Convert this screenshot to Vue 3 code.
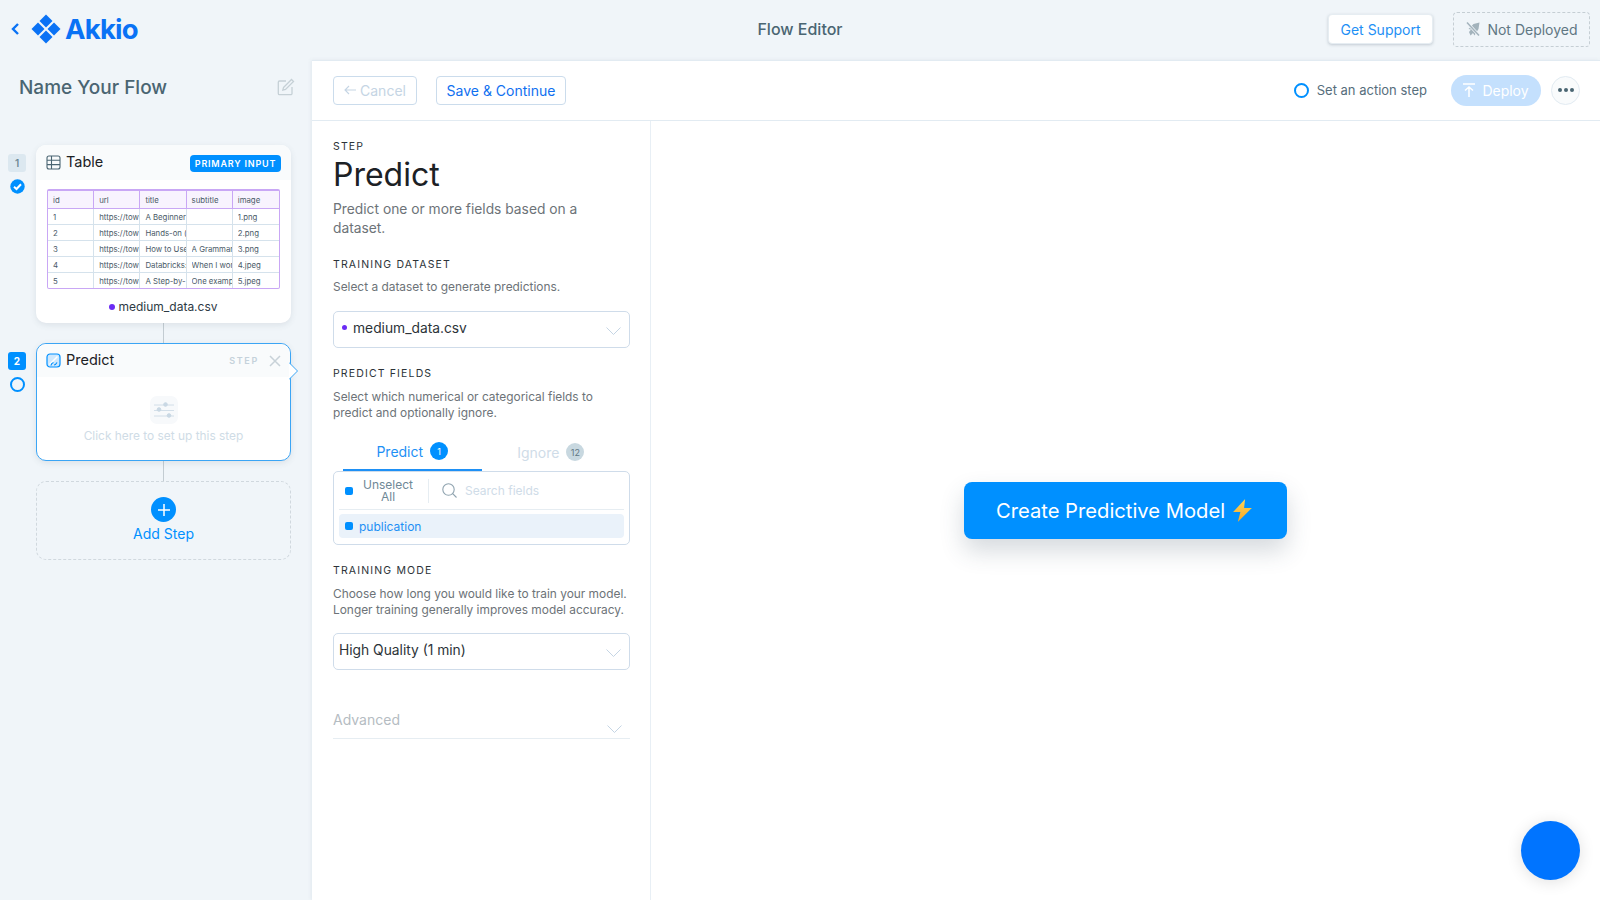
<template>
  <div class="page">
    <header class="topbar">
      <div class="brand">
        <svg class="back" width="10" height="14" viewBox="0 0 10 14"><path d="M8 2 3 7l5 5" fill="none" stroke="#0a72f5" stroke-width="2.4"/></svg>
        <svg class="logo" width="30" height="30" viewBox="0 0 30 30" fill="#0a72f5">
          <path d="M15 0.5 21.5 7 15 13.5 8.5 7z" />
          <path d="M7 8.5 13.5 15 7 21.5 0.5 15z" />
          <path d="M23 8.5 29.5 15 23 21.5 16.5 15z" />
          <path d="M15 16.5 21.5 23 15 29.5 8.5 23z" />
        </svg>
        <span class="brand-name">Akkio</span>
      </div>
      <div class="page-title">Flow Editor</div>
      <div class="top-actions">
        <button class="support" type="button">Get Support</button>
        <div class="not-deployed">
          <svg width="16" height="16" viewBox="0 0 16 16" fill="#a3b3bc">
            <path d="M14.500 1.500 8.500 3 3.500 8l2.500.5L4 11l1.500 3.500L8 12l1.500 2.500L13.500 8z" />
            <path d="M2 1.500 14 14.500" stroke="#f0f5f9" stroke-width="3" />
            <path d="M2 1.500 14 14.500" stroke="#a3b3bc" stroke-width="1.500" />
          </svg>
          Not Deployed
        </div>
      </div>
    </header>

    <div class="body">
      <aside class="sidebar">
        <div class="flow-name">
          <span>Name Your Flow</span>
          <svg width="18" height="18" viewBox="0 0 18 18" fill="none" stroke="#c5d0d6" stroke-width="1.3">
            <path d="M9 3H2.5A1.2 1.2 0 0 0 1.3 4.2v11.3a1.2 1.2 0 0 0 1.2 1.2h11.3a1.2 1.2 0 0 0 1.2-1.2V9" />
            <path d="M6.5 9.5 14.5 1.5l2 2-8 8-2.700.7z" />
          </svg>
        </div>

        <div class="steps">
          <div class="step-row">
            <div class="marker">
              <span class="num">1</span>
              <svg width="15" height="15" viewBox="0 0 15 15"><circle cx="7.500" cy="7.500" r="7.200" fill="#0090ff"/><path d="M4 7.800 6.500 10 11 5.300" fill="none" stroke="#fff" stroke-width="2"/></svg>
            </div>
            <div class="card">
              <div class="card-head">
                <svg width="15" height="15" viewBox="0 0 15 15" fill="none" stroke="#4a6572" stroke-width="1.100"><rect x="1" y="1" width="13" height="13" rx="2"/><path d="M1 5.300h13M1 9.600h13M5.500 1v13"/></svg>
                <span class="card-title">Table</span>
                <span class="primary-tag">PRIMARY INPUT</span>
              </div>
              <div class="preview">
                <table class="mini-table">
                  <thead>
                    <tr><th v-for="c in columns" :key="c">{{ c }}</th></tr>
                  </thead>
                  <tbody>
                    <tr v-for="row in rows" :key="row[0]">
                      <td v-for="(cell, i) in row" :key="i"><div class="cell">{{ cell }}</div></td>
                    </tr>
                  </tbody>
                </table>
                <div class="file-name"><i class="dot"></i>medium_data.csv</div>
              </div>
            </div>
          </div>

          <div class="line"></div>

          <div class="step-row">
            <div class="marker">
              <span class="num active">2</span>
              <span class="ring"></span>
            </div>
            <div class="card selected">
              <div class="card-head short">
                <svg width="15" height="15" viewBox="0 0 15 15" fill="#cfe8fd" stroke="#0090ff" stroke-width="1.200"><rect x="1" y="1" width="13" height="13" rx="3"/><path d="M3.500 11.500 11.500 3.500" stroke="#fff" stroke-width="1.500"/><path d="M5 12.500c0-2 1-2.500 2.500-3M8 12c1 0 2-.8 3-2.500" fill="none"/></svg>
                <span class="card-title">Predict</span>
                <span class="step-tag">STEP</span>
                <svg class="close" width="12" height="12" viewBox="0 0 12 12"><path d="M1 1l10 10M11 1 1 11" stroke="#c8d2d8" stroke-width="1.500"/></svg>
              </div>
              <div class="setup">
                <div class="setup-icon">
                  <svg width="20" height="16" viewBox="0 0 20 16" fill="#c9d8e4" stroke="#c9d8e4">
                    <path d="M0 3h20M0 8.500h20M0 14h20" stroke-width="0.800"/>
                    <circle cx="11.500" cy="2.500" r="1.800"/><circle cx="5" cy="7.500" r="1.800"/><circle cx="15" cy="13.500" r="1.800"/>
                  </svg>
                </div>
                <span>Click here to set up this step</span>
              </div>
              <svg class="pointer" width="10" height="20" viewBox="0 0 10 20"><path d="M0 1.500 8.500 10 0 18.500" fill="#fff" stroke="#3ba5f5" stroke-width="1"/></svg>
            </div>
          </div>

          <div class="line short-line"></div>

          <div class="step-row">
            <div class="marker"></div>
            <div class="add-step">
              <span class="plus">
                <svg width="14" height="14" viewBox="0 0 14 14"><path d="M7 1v12M1 7h12" stroke="#fff" stroke-width="1.500"/></svg>
              </span>
              <span>Add Step</span>
            </div>
          </div>
        </div>
      </aside>

      <main class="main">
        <div class="toolbar">
          <button class="tool-btn cancel" type="button">
            <svg width="12" height="10" viewBox="0 0 12 10"><path d="M5 1 1 5l4 4M1 5h11" fill="none" stroke="#c5d5e4" stroke-width="1.100"/></svg>
            Cancel
          </button>
          <button class="tool-btn save" type="button">Save &amp; Continue</button>
          <div class="spacer"></div>
          <span class="ring"></span>
          <span class="action-text">Set an action step</span>
          <button class="deploy" type="button">
            <svg width="12" height="14" viewBox="0 0 12 14" fill="none" stroke="#fff" stroke-width="1.500"><path d="M0 1h12M6 14V4M2 7.500 6 4l4 3.500"/></svg>
            Deploy
          </button>
          <button class="more" type="button"><i></i><i></i><i></i></button>
        </div>

        <div class="work">
          <section class="panel">
            <div class="eyebrow">STEP</div>
            <h1>Predict</h1>
            <p class="lead">Predict one or more fields based on a dataset.</p>

            <div class="eyebrow dataset-label">TRAINING DATASET</div>
            <p class="hint first">Select a dataset to generate predictions.</p>
            <div class="select">
              <span class="select-value"><i class="dot small"></i>medium_data.csv</span>
              <svg class="chev" width="15" height="8" viewBox="0 0 15 8"><path d="M.5.5l7 7 7-7" fill="none" stroke="#c5d5e4"/></svg>
            </div>

            <div class="eyebrow fields-label">PREDICT FIELDS</div>
            <p class="hint fields-hint">Select which numerical or categorical fields to predict and optionally ignore.</p>
            <div class="tabs">
              <div class="tab on">Predict <span class="count">1</span></div>
              <div class="tab">Ignore <span class="count grey">12</span></div>
            </div>
            <div class="fields">
              <div class="fields-top">
                <i class="check"></i>
                <span class="unselect">Unselect All</span>
                <div class="search">
                  <svg width="15" height="15" viewBox="0 0 15 15" fill="none" stroke="#8fa3af" stroke-width="1.100"><circle cx="6.500" cy="6.500" r="5.700"/><path d="M10.700 10.700 14.500 14.500"/></svg>
                  <span>Search fields</span>
                </div>
              </div>
              <div class="field-item"><i class="check"></i>publication</div>
            </div>

            <div class="eyebrow mode-label">TRAINING MODE</div>
            <p class="hint mode-hint">Choose how long you would like to train your model. Longer training generally improves model accuracy.</p>
            <div class="select mode">
              <span class="select-value">High Quality (1 min)</span>
              <svg class="chev" width="15" height="8" viewBox="0 0 15 8"><path d="M.5.5l7 7 7-7" fill="none" stroke="#c5d5e4"/></svg>
            </div>

            <div class="advanced">
              <span>Advanced</span>
              <svg class="chev" width="15" height="8" viewBox="0 0 15 8"><path d="M.5.5l7 7 7-7" fill="none" stroke="#c5d5e4"/></svg>
            </div>
          </section>

          <section class="canvas">
            <button class="create" type="button">
              Create Predictive Model
              <svg width="19" height="23" viewBox="0 0 18 22"><defs><linearGradient id="bolt" x1="0" y1="0" x2="0" y2="1"><stop offset="0" stop-color="#ffd65a"/><stop offset="1" stop-color="#f5a623"/></linearGradient></defs><path d="M11.500 0 0 12.500h7L4.500 22 18 8.500h-7.500z" fill="url(#bolt)"/></svg>
            </button>
          </section>
        </div>
      </main>
    </div>

    <div class="chat"></div>
  </div>
</template>

<script setup>
const columns = ['id', 'url', 'title', 'subtitle', 'image']
// only what the narrow preview columns have room for
const rows = [
  ['1', 'https://tow', 'A Beginner', '', '1.png'],
  ['2', 'https://tow', 'Hands-on (', '', '2.png'],
  ['3', 'https://tow', 'How to Use', 'A Grammar', '3.png'],
  ['4', 'https://tow', 'Databricks:', 'When I wor', '4.jpeg'],
  ['5', 'https://tow', 'A Step-by-', 'One examp', '5.jpeg'],
]
</script>

<style>
html, body { margin: 0; background: #f0f5f9; }
</style>

<style scoped>
.page {
  width: 1600px;
  height: 900px;
  overflow: hidden;
  display: flex;
  flex-direction: column;
  background: #f0f5f9;
  font-family: Inter, "Liberation Sans", sans-serif;
  color: #1c2125;
  position: relative;
}
button { font-family: inherit; cursor: pointer; }
p, h1 { margin: 0; }

.topbar {
  height: 60px;
  flex: none;
  box-sizing: border-box;
  padding-bottom: 2px;
  display: grid;
  grid-template-columns: 1fr auto 1fr;
  align-items: center;
}
.brand { display: flex; align-items: center; padding-left: 10px; }
.logo { margin-left: 11px; }
.brand-name { margin-left: 4px; font-size: 27.500px; font-weight: 700; letter-spacing: -0.8px; color: #0a72f5; }
.page-title { font-size: 16px; font-weight: 500; color: #4a6572; }
.top-actions { display: flex; justify-content: flex-end; align-items: center; gap: 20px; padding-right: 10px; }
.support {
  width: 105px;
  height: 30px;
  background: #fff;
  border: 1px solid #e6edf2;
  border-radius: 4px;
  box-shadow: 0 1px 3px rgba(60, 80, 100, .25);
  color: #1e90f5;
  font-size: 14px;
}
.not-deployed {
  width: 137px;
  height: 35px;
  box-sizing: border-box;
  border: 1px dashed #c5ced4;
  border-radius: 4px;
  display: flex;
  align-items: center;
  justify-content: center;
  gap: 6px;
  color: #5f7783;
  font-size: 14px;
}

.body { flex: 1; display: flex; min-height: 0; }
.sidebar { width: 312px; flex: none; }
.flow-name {
  display: flex;
  align-items: center;
  justify-content: space-between;
  padding: 15px 17px 0 19px;
  height: 24px;
  font-size: 19px;
  font-weight: 500;
  color: #4a6572;
}
.steps { margin-top: 46px; }
.step-row { display: flex; }
.marker { width: 36px; flex: none; display: flex; flex-direction: column; align-items: center; padding: 9px 2px 0 0; box-sizing: border-box; gap: 7px; }
.num {
  width: 18px;
  height: 18px;
  border-radius: 3px;
  background: #dce8f0;
  color: #6f8896;
  font-size: 10px;
  font-weight: 600;
  display: flex;
  align-items: center;
  justify-content: center;
}
.num.active { background: #0090ff; color: #fff; font-weight: 700; }
.ring { width: 15px; height: 15px; box-sizing: border-box; border: 2px solid #0090ff; border-radius: 50%; flex: none; }
.card {
  width: 255px;
  box-sizing: border-box;
  background: #fff;
  border-radius: 10px;
  box-shadow: 0 2px 6px rgba(70, 90, 110, .12);
  position: relative;
}
.card.selected { border: 1px solid #3ba5f5; height: 118px; }
.card-head {
  height: 35px;
  background: #f9fbfc;
  border-radius: 10px 10px 0 0;
  display: flex;
  align-items: center;
  padding: 0 10px;
  gap: 5px;
}
.card-head.short { height: 33px; padding: 0 9px 0 9px; }
.card-title { font-size: 14.500px; font-weight: 400; color: #1c2125; margin-top: -2px; }
.primary-tag {
  margin-left: auto;
  margin-top: 2px;
  width: 91px;
  height: 17px;
  border-radius: 4px;
  background: #0090ff;
  color: #fff;
  font-size: 9px;
  font-weight: 600;
  letter-spacing: .8px;
  display: flex;
  align-items: center;
  justify-content: center;
}
.step-tag { margin-left: auto; margin-right: 5px; font-size: 9px; font-weight: 600; letter-spacing: 1.700px; color: #c5d2db; }
.preview { padding: 9px 11px 0; height: 143px; box-sizing: border-box; }
.mini-table {
  width: 233px;
  table-layout: fixed;
  border-collapse: separate;
  border-spacing: 0;
  border: 1px solid #c9a7f5;
  border-top-width: 2px;
  border-radius: 2px;
  font-size: 7.800px;
  color: #4a5a68;
}
.mini-table th {
  height: 17px;
  padding: 0 5px;
  text-align: left;
  font-weight: 400;
  background: #f8f3fe;
  border-right: 1px solid #c9a7f5;
  border-bottom: 1px solid #c9a7f5;
}
.mini-table td {
  height: 15px;
  padding: 0 0 0 5px;
  border-right: 1px solid #d5e2ec;
  border-bottom: 1px solid #d5e2ec;
}
.mini-table th:last-child, .mini-table td:last-child { border-right: 0; }
.mini-table tr:last-child td { border-bottom: 0; }
.cell { overflow: hidden; white-space: nowrap; }
.file-name {
  margin-top: 10px;
  display: flex;
  align-items: center;
  justify-content: center;
  gap: 3px;
  font-size: 12px;
  color: #2d3a44;
}
.dot { width: 6px; height: 6px; border-radius: 50%; background: #6b2cf5; display: inline-block; flex: none; }
.dot.small { width: 5px; height: 5px; margin-right: 6px; }
.line { width: 1px; height: 20px; background: #c3ccd2; margin-left: 163px; }
.short-line { height: 20px; }
.setup {
  display: flex;
  flex-direction: column;
  align-items: center;
  padding-top: 19px;
  color: #cfdce6;
  font-size: 11.900px;
}
.setup-icon {
  width: 28px;
  height: 28px;
  border-radius: 7px;
  background: #f7f9fb;
  display: flex;
  align-items: center;
  justify-content: center;
  margin-bottom: 4px;
}
.pointer { position: absolute; right: -9px; top: 17px; }
.close { flex: none; }
.add-step {
  width: 255px;
  height: 79px;
  box-sizing: border-box;
  border: 1.500px dashed #d0d8de;
  border-radius: 10px;
  padding-bottom: 2px;
  display: flex;
  flex-direction: column;
  align-items: center;
  justify-content: center;
  gap: 3px;
  color: #0090ff;
  font-size: 14px;
}
.plus { width: 25px; height: 25px; border-radius: 50%; background: #0090ff; display: flex; align-items: center; justify-content: center; }

.main {
  flex: 1;
  background: #fff;
  border-top: 1px solid #e2ebf2;
  display: flex;
  flex-direction: column;
  min-width: 0;
  box-shadow: -1px 0 4px rgba(70, 90, 110, .08);
}
.toolbar {
  height: 60px;
  flex: none;
  box-sizing: border-box;
  border-bottom: 1px solid #e2ebf2;
  display: flex;
  align-items: center;
  padding: 0 20px 1px 21px;
}
.tool-btn {
  height: 29px;
  box-sizing: border-box;
  background: #fff;
  border: 1px solid #cbdcec;
  border-radius: 4px;
  font-size: 14px;
  display: flex;
  align-items: center;
  justify-content: center;
  padding: 0;
}
.cancel { width: 84px; color: #c5d5e4; gap: 4px; }
.save { width: 130px; margin-left: 19px; color: #1070f0; }
.spacer { flex: 1; }
.action-text { margin-left: 8px; font-size: 13px; color: #566e7c; }
.deploy {
  margin-left: 24px;
  width: 90px;
  height: 31px;
  border: 0;
  border-radius: 16px;
  background: #c4e0fd;
  color: #fff;
  font-size: 14px;
  display: flex;
  align-items: center;
  justify-content: center;
  gap: 7px;
}
.more {
  margin-left: 10px;
  width: 29px;
  height: 29px;
  padding: 0;
  box-sizing: border-box;
  background: #f9fbfc;
  border: 1px solid #e2ebf2;
  border-radius: 50%;
  display: flex;
  align-items: center;
  justify-content: center;
  gap: 2px;
}
.more i { width: 4px; height: 4px; border-radius: 50%; background: #4a6572; }

.work { flex: 1; display: flex; min-height: 0; }
.panel {
  width: 339px;
  flex: none;
  box-sizing: border-box;
  border-right: 1px solid #e8eff5;
  padding: 19px 20px 0 21px;
}
.eyebrow { font-size: 10.500px; font-weight: 400; letter-spacing: 1.150px; color: #2c3338; line-height: 14px; }
h1 { font-size: 32px; font-weight: 400; line-height: 41px; color: #1c2125; }
.lead { margin-top: 5px; font-size: 13.800px; line-height: 19px; color: #6d7378; }
.dataset-label { margin-top: 20px; }
.fields-label { margin-top: 19px; }
.mode-label { margin-top: 19px; }
.hint { margin-top: 9px; font-size: 11.900px; line-height: 16px; color: #6d7378; }
.hint.first { margin-top: 7px; }
.hint.fields-hint { margin-top: 8px; }
.hint.mode-hint { margin-top: 8px; }
.select {
  margin-top: 16px;
  height: 37px;
  box-sizing: border-box;
  border: 1px solid #cfdcea;
  border-radius: 5px;
  display: flex;
  align-items: center;
  justify-content: space-between;
  padding: 0 8px 0 8px;
  font-size: 13.800px;
  color: #2c3338;
}
.select-value { display: flex; align-items: center; margin-top: -4px; }
.chev { margin-top: 3px; }
.mode { margin-top: 15px; padding-left: 5px; }
.mode .select-value { margin-top: -3px; }
.mode .chev { margin-top: 2px; }
.tabs { display: flex; margin: 13px 0 0 10px; width: 277px; height: 37px; }
.tab {
  flex: 1;
  display: flex;
  align-items: center;
  justify-content: center;
  gap: 7px;
  font-size: 14px;
  color: #cfdce8;
  padding-bottom: 1px;
  box-sizing: border-box;
}
.tab.on { color: #1e90f5; border-bottom: 2px solid #1e90f5; }
.count {
  width: 18px;
  height: 18px;
  border-radius: 50%;
  background: #0090ff;
  color: #fff;
  font-size: 9px;
  display: flex;
  align-items: center;
  justify-content: center;
}
.count.grey { background: #c8d8e0; color: #5f7783; }
.fields {
  height: 74px;
  box-sizing: border-box;
  border: 1px solid #cfdcea;
  border-radius: 5px;
  padding: 0 5px;
}
.fields-top {
  height: 37px;
  border-bottom: 1px solid #e6edf2;
  display: flex;
  align-items: center;
  padding-left: 6px;
}
.check { width: 8px; height: 8px; border-radius: 2px; background: #0090ff; display: inline-block; flex: none; }
.unselect {
  width: 56px;
  margin-left: 7px;
  padding-right: 12px;
  text-align: center;
  font-size: 12px;
  line-height: 12px;
  color: #6f8896;
  border-right: 1px solid #e6edf2;
}
.search { margin-left: 13px; display: flex; align-items: center; gap: 8px; font-size: 12px; color: #cfdce8; }
.field-item {
  margin-top: 4px;
  height: 24px;
  border-radius: 4px;
  background: #eaf2fa;
  display: flex;
  align-items: center;
  gap: 6px;
  padding-left: 6px;
  font-size: 12px;
  color: #1e90f5;
}
.advanced {
  margin-top: 41px;
  height: 27px;
  border-bottom: 1px solid #e6edf2;
  display: flex;
  justify-content: space-between;
  align-items: flex-start;
  padding-right: 8px;
  font-size: 14px;
  color: #b5bcc2;
}
.advanced .chev { margin-top: 14px; }

.canvas { flex: 1; display: flex; align-items: center; justify-content: center; }
.create {
  width: 323px;
  height: 57px;
  border: 0;
  border-radius: 8px;
  padding: 0 3px 0 0;
  background: #0090ff;
  color: #fff;
  font-size: 20.200px;
  display: flex;
  align-items: center;
  justify-content: center;
  gap: 8px;
  box-shadow: 0 12px 24px rgba(50, 70, 90, .2);
}
.chat {
  position: absolute;
  right: 20px;
  bottom: 20px;
  width: 59px;
  height: 59px;
  border-radius: 50%;
  background: #0074ff;
  box-shadow: 0 2px 16px rgba(0, 0, 0, .12);
}
</style>
